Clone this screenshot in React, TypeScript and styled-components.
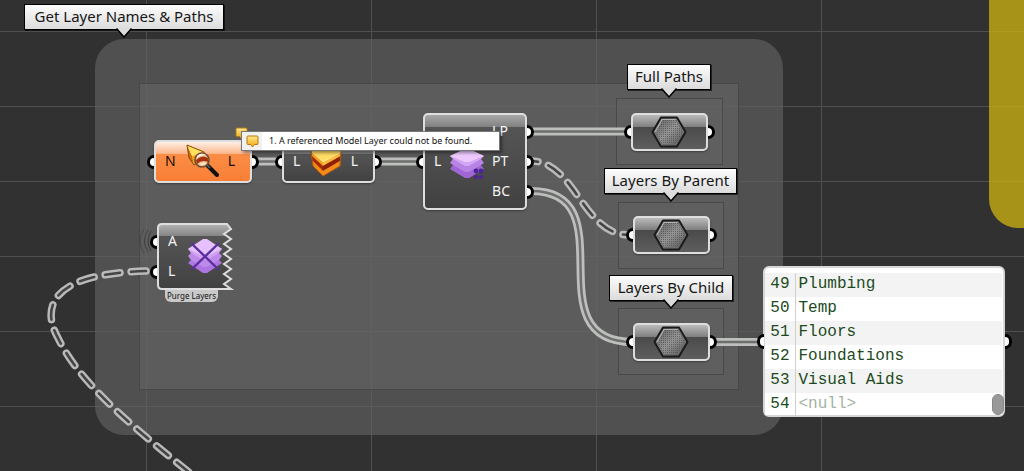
import React from "react";
import styled, { createGlobalStyle, css } from "styled-components";

const GlobalStyle = createGlobalStyle`
  *, *::before, *::after { box-sizing: border-box; }
  body {
    margin: 0;
    background: #313131;
    font-family: "Noto Sans", "Open Sans", sans-serif;
  }
`;

type Place = { $x: number; $y: number; $w: number; $h: number };

const place = css<Place>`
  position: absolute;
  left: ${(p) => p.$x}px;
  top: ${(p) => p.$y}px;
  width: ${(p) => p.$w}px;
  height: ${(p) => p.$h}px;
`;

const Canvas = styled.main`
  position: relative;
  width: 100%;
  min-height: 100vh;
  overflow: hidden;
  background-color: #313131;
  background-image: linear-gradient(to right, #505050 1px, transparent 1px),
    linear-gradient(to bottom, #505050 1px, transparent 1px);
  background-size: 225px 75px;
  background-position: 146px 31px;
`;

const Group = styled.section<Place & { $tone: "outer" | "inner" | "cell" | "gold" }>`
  ${place}
  ${(p) =>
    p.$tone === "outer" &&
    css`
      background: rgba(97, 97, 97, 0.65);
      border-radius: 29px;
    `}
  ${(p) =>
    p.$tone === "inner" &&
    css`
      background: rgba(104, 104, 104, 0.5);
      border: 1px solid #474747;
    `}
  ${(p) =>
    p.$tone === "cell" &&
    css`
      background: rgba(104, 104, 104, 0.3);
      border: 1px solid #494949;
    `}
  ${(p) =>
    p.$tone === "gold" &&
    css`
      background: rgba(198, 173, 18, 0.8);
      border-radius: 0 0 29px 29px;
    `}
`;

const Wires = styled.svg`
  position: absolute;
  left: 0;
  top: 0;
  overflow: visible;
  fill: none;
`;

const faces = {
  grey: css`
    color: #f4f4f4;
    background: linear-gradient(#a8a8a8, #808080 12px, #555 12px, #414141);
  `,
  param: css`
    color: #f4f4f4;
    background: linear-gradient(#bababa, #7e7e7e 12px, #4a4a4a 12px, #5e5e5e);
  `,
  orange: css`
    color: #1c0e04;
    background: linear-gradient(#fff0e6, #fbb488 12px, #fb8d47 12px, #f97f35);
  `,
  cut: css`
    color: #f4f4f4;
  `,
};

const NodeBox = styled.article<Place & { $face: keyof typeof faces }>`
  ${place}
  display: flex;
  align-items: center;
  justify-content: space-between;
  border: 2px solid ${(p) => (p.$face === "cut" ? "transparent" : "#dedede")};
  border-radius: 5px;
  box-shadow: ${(p) => (p.$face === "cut" ? "none" : "0 1px 2px rgba(0, 0, 0, 0.35)")};
  ${(p) => faces[p.$face]}
`;

const Pins = styled.div`
  display: flex;
  flex-direction: column;
`;

const Pin = styled.span<{ $side: "in" | "out" }>`
  position: relative;
  display: block;
  height: 30px;
  padding: ${(p) => (p.$side === "in" ? "0 0 0 9px" : "0 15px 0 0")};
  font-size: 14px;
  line-height: 28px;
`;

const Port = styled.i<{ $side: "in" | "out" }>`
  position: absolute;
  top: 8px;
  ${(p) => (p.$side === "in" ? "left: -9px;" : "right: -9px;")}
  width: 7px;
  height: 14px;
  background: #fff;
  border: 3px solid #000;
  ${(p) =>
    p.$side === "in"
      ? "border-right: 0; border-radius: 7px 0 0 7px;"
      : "border-left: 0; border-radius: 0 7px 7px 0;"}
`;

const IconSlot = styled.span<{ $x: number; $y: number }>`
  position: absolute;
  left: ${(p) => p.$x}px;
  top: ${(p) => p.$y}px;
  display: block;
  svg {
    display: block;
  }
`;

const CutShape = styled.svg`
  position: absolute;
  left: -2px;
  top: -2px;
  overflow: visible;
`;

const NodeCaption = styled.small<Place>`
  ${place}
  display: flex;
  align-items: center;
  justify-content: center;
  background: #c9c9c9;
  border-radius: 0 0 6px 6px;
  color: #111;
  font-size: 8px;
  line-height: 12px;
  white-space: nowrap;
`;

const Tag = styled.h2<Place>`
  ${place}
  margin: 0;
  background: linear-gradient(#fcfcfc, #dcdcdc);
  border: 1px solid #000;
  box-shadow: 1px 1px 0 rgba(0, 0, 0, 0.6);
  color: #161616;
  font-size: 15px;
  font-weight: 400;
  line-height: 22px;
  text-align: center;
  white-space: nowrap;
`;

const TagTail = styled.svg`
  position: absolute;
  left: 50%;
  top: 100%;
  margin-left: -8px;
  margin-top: -1px;
`;

const Tooltip = styled.div<Place>`
  ${place}
  display: flex;
  align-items: center;
  padding-left: 4px;
  gap: 10px;
  background: linear-gradient(to right, #f1f1f1 20px, #fff 20px);
  border: 1px solid #777;
  box-shadow: 2px 2px 3px rgba(0, 0, 0, 0.4);
  color: #111;
  font-size: 9px;
  line-height: 16px;
  white-space: nowrap;
`;

const Panel = styled.div<Place>`
  ${place}
  background: #fff;
  border: 2px solid #d6d6d6;
  border-radius: 6px;
`;

const PanelView = styled.div`
  height: 100%;
  padding: 5px 1px 0 0;
  overflow: hidden;
`;

const Table = styled.table`
  width: 100%;
  border-collapse: collapse;
  color: #1d4a1d;
  font-family: "Liberation Mono", monospace;
  font-size: 16px;
  line-height: 22px;
`;

const Row = styled.tr<{ $striped: boolean; $empty: boolean }>`
  height: 24px;
  vertical-align: top;
  background: ${(p) => (p.$striped ? "#f3f3f3" : "#fff")};
  td {
    padding: 0 0 0 3px;
    color: ${(p) => (p.$empty ? "#a3b3a3" : "inherit")};
  }
  th {
    width: 30px;
    padding: 0 5px 0 0;
    border-right: 1px solid #cfcfcf;
    font-weight: 400;
    text-align: right;
  }
`;

const Thumb = styled.i`
  position: absolute;
  right: -1px;
  bottom: 0;
  width: 12px;
  height: 21px;
  background: #999;
  border: 1px solid #888;
  border-radius: 6px;
`;

const PanelPort = styled.i<{ $side: "in" | "out" }>`
  position: absolute;
  top: 66px;
  ${(p) => (p.$side === "in" ? "left: -8px;" : "right: -9px;")}
  width: 7px;
  height: 15px;
  background: #fff;
  border: 3px solid #000;
  ${(p) =>
    p.$side === "in"
      ? "border-right: 0; border-radius: 7px 0 0 7px;"
      : "border-left: 0; border-radius: 0 7px 7px 0;"}
`;

function Wire({ d }: { d: string }) {
  return (
    <g>
      <path d={d} stroke="#bdbfbd" strokeWidth="8" />
      <path d={d} stroke="#6d6e6d" strokeWidth="2.5" />
    </g>
  );
}

function DashedWire({ d, offset = 0 }: { d: string; offset?: number }) {
  const dash = { strokeDasharray: "15 11", strokeDashoffset: offset, strokeLinecap: "round" as const };
  return (
    <g>
      <path d={d} stroke="#b9b9b9" strokeWidth="7.5" {...dash} />
      <path d={d} stroke="#444" strokeWidth="2.600" {...dash} />
    </g>
  );
}

function CakeIcon() {
  return (
    <svg width="32" height="34" viewBox="0 0 32 34" aria-hidden="true">
      <path d="M1 8 L16 1 L31 9 L13 19 Z" fill="#ffdc63" />
      <path d="M1 8 L13 19 L13 33 L3 23 Z" fill="#f7a01e" />
      <path d="M13 19 L31 9 L30 23 L13 33 Z" fill="#ffb638" />
      <path d="M2 13 L13 23 L31 13 L30 18 L13 28 L2 18 Z" fill="#a22a0b" />
      <path d="M13 23 L31 13 L30 18 L13 28 Z" fill="#8a2108" />
      <path d="M3 18 L13 28 L13 33 L3 23 Z" fill="#f28a12" />
      <path d="M13 28 L30 18 L30 23 L13 33 Z" fill="#f78a1c" />
      <path d="M1 8 L13 19 L31 9" fill="none" stroke="#fff0a0" />
      <path d="M1 8 L3 23 L13 33 L30 23 L31 9" fill="none" stroke="#b4560c" />
    </svg>
  );
}

function FindLayerIcon() {
  return (
    <svg width="34" height="34" viewBox="0 0 34 34" aria-hidden="true">
      <path d="M1 1 L18 8 L18 14 L6 20 Z" fill="#ffc73a" />
      <path d="M1 1 L6 12 L8 21 L3 14 Z" fill="#c96d10" />
      <path d="M6 12 L18 8 L18 15 L8 21 Z" fill="#f2a01c" />
      <path d="M1 1 L18 8 L6 12 Z" fill="#ffe060" />
      <path d="M1 1 L18 8 L18 14 L8 21 L3 14 Z" fill="none" stroke="#8a4a06" />
      <path d="M22 22 L31 31" stroke="#111" strokeWidth="4" strokeLinecap="round" />
      <path d="M20 20 L24 24" stroke="#555" strokeWidth="2" />
      <circle cx="16" cy="16" r="7" fill="#e9bd98" stroke="#6b4a35" strokeWidth="1.600" />
      <path d="M10 16 Q16 10 22 14 L22 18 Q16 15 11 20 Z" fill="#a8320c" />
      <path d="M11 12 Q15 8 20 11 Q15 11 11 14 Z" fill="#fff1dd" />
      <path d="M13 20 Q16 17 21 19 Q17 23 13 20 Z" fill="#ffe0b8" />
    </svg>
  );
}

function PathLayersIcon() {
  return (
    <svg width="36" height="36" viewBox="0 0 36 36" aria-hidden="true">
      <path d="M1 24 L4 20 H32 L35 24 L20 33 L16 33 Z" fill="#a066d4" />
      <path d="M1 18 L4 14 H32 L35 18 L32 20 L20 27 L16 27 L4 20 Z" fill="#b784e6" />
      <path d="M1 11 L18 3 L35 11 L32 14 L20 21 L16 21 L4 14 Z" fill="#d2a6f4" />
      <path d="M1 11 L18 3 L35 11 L20 17 L16 17 Z" fill="#eec9ff" />
      <g fill="#4c2399">
        <circle cx="27" cy="26" r="2.400" />
        <circle cx="32" cy="26" r="2.400" />
        <circle cx="27" cy="32" r="2.100" />
        <circle cx="32" cy="32" r="2.100" />
      </g>
    </svg>
  );
}

function PurgeIcon() {
  return (
    <svg width="36" height="36" viewBox="0 0 36 36" aria-hidden="true">
      <path d="M1 25 L4 22 H32 L35 25 L20 35 L16 35 Z" fill="#ae76e0" />
      <path d="M1 18 L4 15 H32 L35 18 L32 22 L20 29 L16 29 L4 22 Z" fill="#bd8aea" />
      <path d="M1 11 L16 2 L20 2 L35 11 L32 15 L20 22 L16 22 L4 15 Z" fill="#cfa0f4" />
      <path d="M1 11 L16 1 L20 1 L35 11 L20 18 L16 18 Z" fill="#e6c0ff" />
      <path d="M5 6 L31 31 M31 6 L5 31" stroke="#5a2f9e" strokeWidth="2.400" strokeLinecap="round" />
    </svg>
  );
}

function HexIcon() {
  return (
    <svg width="36" height="32" viewBox="0 0 36 32" aria-hidden="true">
      <defs>
        <linearGradient id="hexFill" x1="0" y1="0" x2="1" y2="1">
          <stop offset="0" stopColor="#565656" />
          <stop offset="0.5" stopColor="#969696" />
          <stop offset="1" stopColor="#4a4a4a" />
        </linearGradient>
        <pattern id="hexDots" width="2" height="2" patternUnits="userSpaceOnUse">
          <rect width="1" height="1" fill="#444" fillOpacity="0.6" />
        </pattern>
      </defs>
      <path d="M10 1.500 H26 L34.500 16 L26 30.500 H10 L1.500 16 Z" fill="url(#hexFill)" stroke="#1a1a1a" strokeWidth="2" strokeLinejoin="round" />
      <path d="M11 4 H25 L32 16 L25 28 H11 L4 16 Z" fill="url(#hexDots)" />
      <path d="M4 16 L11 3.500 H25" fill="none" stroke="#b0b0b0" strokeWidth="1.200" />
      <path d="M25 3.500 L32 16 L25 28.500 H11 L4 16" fill="none" stroke="#6a6a6a" />
    </svg>
  );
}

function BubbleIcon() {
  return (
    <svg width="13" height="13" viewBox="0 0 13 13" aria-hidden="true">
      <defs>
        <linearGradient id="bubbleFill" x1="0" y1="0" x2="0" y2="1">
          <stop offset="0" stopColor="#ffe98c" />
          <stop offset="1" stopColor="#f0a410" />
        </linearGradient>
      </defs>
      <path d="M2 1 H11 Q12 1 12 2 V8.500 Q12 9.500 11 9.500 H8.500 L6.500 12 L4.500 9.500 H2 Q1 9.500 1 8.500 V2 Q1 1 2 1 Z" fill="url(#bubbleFill)" stroke="#b3780f" />
    </svg>
  );
}

function Pinned({ side, names }: { side: "in" | "out"; names: string[] }) {
  return (
    <Pins>
      {names.map((name, i) => (
        <Pin key={i} $side={side}>
          {name}
          <Port $side={side} />
        </Pin>
      ))}
    </Pins>
  );
}

function Label({ x, y, w, children }: { x: number; y: number; w: number; children: string }) {
  return (
    <Tag $x={x} $y={y} $w={w} $h={26}>
      {children}
      <TagTail width="16" height="10" viewBox="0 0 16 10" aria-hidden="true">
        <path d="M0 0 H16 L8 9 Z" fill="#dcdcdc" />
        <path d="M0.500 0.500 L8 9 L15.500 0.500" fill="none" stroke="#000" strokeWidth="1.500" />
      </TagTail>
    </Tag>
  );
}

const params = [
  { x: 631, y: 113 },
  { x: 633, y: 216 },
  { x: 633, y: 323 },
];

const layers = [
  { index: 49, name: "Plumbing" },
  { index: 50, name: "Temp" },
  { index: 51, name: "Floors" },
  { index: 52, name: "Foundations" },
  { index: 53, name: "Visual Aids" },
  { index: 54, name: "<null>" },
];

export default function App() {
  return (
    <>
      <GlobalStyle />
      <Canvas>
        <Group $x={989} $y={0} $w={200} $h={228} $tone="gold" />
        <Group $x={95} $y={39} $w={688} $h={396} $tone="outer" />
        <Group $x={139} $y={83} $w={600} $h={307} $tone="inner" />
        <Group $x={616} $y={98} $w={107} $h={67} $tone="cell" />
        <Group $x={618} $y={202} $w={106} $h={67} $tone="cell" />
        <Group $x={618} $y={308} $w={106} $h={67} $tone="cell" />

        <Wires width="1" height="1" aria-hidden="true">
          <Wire d="M252 161.500 H284" />
          <Wire d="M375 161.500 H424" />
          <Wire d="M527 131.500 H632" />
          <Wire d="M709 342 H764" />
          <Wire d="M531 191 C629 191 531 342 633 342" />
          <DashedWire d="M531 161 C575 161 583 235 629 235" offset={8} />
          <DashedWire d="M146 271 C120 272 90 275 72 285 C46 299 48 320 58 338 C78 380 125 421 190 473" />
          <g stroke="#3f3f3f" strokeWidth="1">
            <path d="M151 231 Q145 241 151 251" />
            <path d="M148 230 Q141 241 148 252" />
            <path d="M144 229 Q136 241 144 253" opacity="0.7" />
          </g>
        </Wires>

        <IconSlot $x={235} $y={127}>
          <BubbleIcon />
        </IconSlot>
        <NodeBox $x={154} $y={140} $w={98} $h={43} $face="orange">
          <Pinned side="in" names={["N"]} />
          <IconSlot $x={30} $y={2}>
            <FindLayerIcon />
          </IconSlot>
          <Pinned side="out" names={["L"]} />
        </NodeBox>
        <NodeBox $x={282} $y={140} $w={93} $h={43} $face="grey">
          <Pinned side="in" names={["L"]} />
          <IconSlot $x={26} $y={1}>
            <CakeIcon />
          </IconSlot>
          <Pinned side="out" names={["L"]} />
        </NodeBox>
        <NodeBox $x={423} $y={113} $w={104} $h={97} $face="grey">
          <Pinned side="in" names={["L"]} />
          <IconSlot $x={24} $y={30}>
            <PathLayersIcon />
          </IconSlot>
          <Pinned side="out" names={["LP", "PT", "BC"]} />
        </NodeBox>

        <NodeCaption $x={165} $y={289} $w={53} $h={13}>
          Purge Layers
        </NodeCaption>
        <NodeBox $x={157} $y={223} $w={75} $h={67} $face="cut">
          <CutShape width="75" height="67" viewBox="0 0 75 67" aria-hidden="true">
            <defs>
              <linearGradient id="cutFill" x1="0" y1="0" x2="0" y2="1">
                <stop offset="0" stopColor="#b4b4b4" />
                <stop offset="0.18" stopColor="#858585" />
                <stop offset="0.18" stopColor="#555" />
                <stop offset="1" stopColor="#414141" />
              </linearGradient>
            </defs>
            <path
              d="M5 1 H70 L74 6 L67 11 L74 16 L67 21 L74 26 L67 31 L74 36 L67 41 L74 46 L67 51 L74 56 L67 61 L74 66 H5 Q1 66 1 62 V5 Q1 1 5 1 Z"
              fill="url(#cutFill)"
              stroke="#dedede"
              strokeWidth="2"
            />
          </CutShape>
          <Pinned side="in" names={["A", "L"]} />
          <IconSlot $x={28} $y={13}>
            <PurgeIcon />
          </IconSlot>
        </NodeBox>

        {params.map(({ x, y }) => (
          <NodeBox key={y} $x={x} $y={y} $w={77} $h={38} $face="param">
            <Pinned side="in" names={[""]} />
            <IconSlot $x={18} $y={1}>
              <HexIcon />
            </IconSlot>
            <Pinned side="out" names={[""]} />
          </NodeBox>
        ))}

        <Label x={24} y={4} w={200}>
          Get Layer Names &amp; Paths
        </Label>
        <Label x={627} y={64} w={84}>
          Full Paths
        </Label>
        <Label x={604} y={168} w={133}>
          Layers By Parent
        </Label>
        <Label x={609} y={275} w={124}>
          Layers By Child
        </Label>

        <Tooltip role="tooltip" $x={241} $y={131} $w={259} $h={20}>
          <BubbleIcon />
          1. A referenced Model Layer could not be found.
        </Tooltip>

        <Panel $x={763} $y={266} $w={242} $h={151}>
          <PanelView>
            <Table>
              <tbody>
                {layers.map(({ index, name }) => (
                  <Row key={index} $striped={index % 2 === 1} $empty={name === "<null>"}>
                    <th scope="row">{index}</th>
                    <td>{name}</td>
                  </Row>
                ))}
              </tbody>
            </Table>
          </PanelView>
          <Thumb />
          <PanelPort $side="in" />
          <PanelPort $side="out" />
        </Panel>
      </Canvas>
    </>
  );
}
